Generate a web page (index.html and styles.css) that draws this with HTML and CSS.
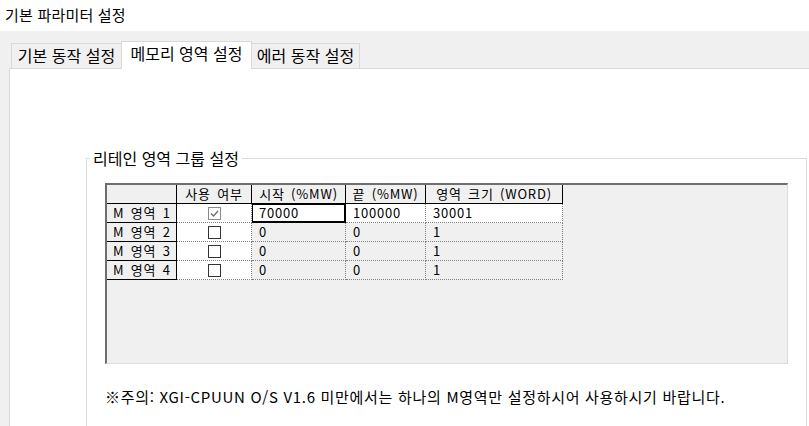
FILE: index.html
```html
<!DOCTYPE html>
<html lang="ko">
<head>
<meta charset="utf-8">
<title>기본 파라미터 설정</title>
<link rel="stylesheet" href="styles.css">
</head>
<body>
<div class="titlebar">기본 파라미터 설정</div>
<div class="dialog">
  <div class="tabs">
    <div class="tab tab-first">기본 동작 설정</div>
    <div class="tab tab-active">메모리 영역 설정</div>
    <div class="tab tab-last">에러 동작 설정</div>
  </div>
  <div class="panel">
    <fieldset class="group">
      <legend>리테인 영역 그룹 설정</legend>
      <div class="grid">
        <div class="table">
          <div class="hd"></div>
          <div class="hd center">사용 여부</div>
          <div class="hd center">시작 (%MW)</div>
          <div class="hd center">끝 (%MW)</div>
          <div class="hd center">영역 크기 (WORD)</div>

          <div class="hd rowhd">M 영역 1</div>
          <div class="cell white chk"><span class="box checked"><svg viewBox="0 0 11 11" width="11" height="11"><polyline points="2,5.5 4.5,8 9,3" fill="none" stroke="#6f6f6f" stroke-width="1.4"/></svg></span></div>
          <div class="cell white focus">70000</div>
          <div class="cell white">100000</div>
          <div class="cell white">30001</div>

          <div class="hd rowhd">M 영역 2</div>
          <div class="cell white chk"><span class="box"></span></div>
          <div class="cell">0</div>
          <div class="cell">0</div>
          <div class="cell">1</div>

          <div class="hd rowhd">M 영역 3</div>
          <div class="cell white chk"><span class="box"></span></div>
          <div class="cell">0</div>
          <div class="cell">0</div>
          <div class="cell">1</div>

          <div class="hd rowhd">M 영역 4</div>
          <div class="cell white chk"><span class="box"></span></div>
          <div class="cell">0</div>
          <div class="cell">0</div>
          <div class="cell">1</div>
        </div>
      </div>
      <p class="note">※주의: XGI-CPUUN O/S V1.6 미만에서는 하나의 M영역만 설정하시어 사용하시기 바랍니다.</p>
    </fieldset>
  </div>
</div>
</body>
</html>
```
FILE: styles.css
```css
html, body {
  margin: 0;
  padding: 0;
  width: 809px;
  height: 426px;
  overflow: hidden;
  background: #f0f0f0;
}
body {
  font-family: "Noto Sans CJK KR", "Noto Sans", sans-serif;
  color: #000;
}
.titlebar {
  height: 31px;
  box-sizing: border-box;
  background: #fff;
  font-size: 15px;
  line-height: 30px;
  padding-left: 5px;
  letter-spacing: 0.2px;
}
.dialog {
  height: 395px;
  box-sizing: border-box;
  padding: 10px 0 0 9px;
  display: flex;
  flex-direction: column;
}
.tabs {
  display: flex;
  align-items: flex-end;
  height: 28px;
  padding-left: 2px;
  margin-bottom: -1px;
  position: relative;
  z-index: 1;
}
.tab {
  box-sizing: border-box;
  height: 25px;
  margin-bottom: 1px;
  background: #f0f0f0;
  border-top: 1px solid #d9d9d9;
  font-size: 16px;
  line-height: 23px;
  text-align: center;
  white-space: nowrap;
}
.tab-first {
  width: 111px;
  border-left: 1px solid #d9d9d9;
  border-right: 1px solid #d9d9d9;
}
.tab-active {
  width: 131px;
  height: 28px;
  margin-bottom: 0;
  margin-left: -1px;
  background: #fff;
  border-left: 1px solid #d9d9d9;
  border-right: 1px solid #d9d9d9;
  line-height: 22px;
  position: relative;
}
.tab-last {
  width: 108px;
  border-right: 1px solid #d9d9d9;
}
.panel {
  flex: 1;
  background: #fff;
  border-top: 1px solid #d9d9d9;
  border-left: 1px solid #d9d9d9;
}
.group {
  box-sizing: border-box;
  width: 721px;
  height: 320px;
  margin: 79px 0 0 76px;
  padding: 0;
  border: 1px solid #dcdcdc;
}
.group legend {
  font-size: 16px;
  line-height: 20px;
  padding: 0 3px;
  margin-left: 3px;
}
.grid {
  box-sizing: border-box;
  width: 683px;
  height: 181px;
  margin: 15px 0 0 18px;
  background: #f0f0f0;
  border-top: 2px solid #6e6e6e;
  border-left: 2px solid #6e6e6e;
  border-right: 1px solid #dcdcdc;
  border-bottom: 1px solid #dcdcdc;
}
.table {
  display: grid;
  grid-template-columns: 70px 75px 94px 80px 137px;
  grid-template-rows: repeat(5, 19px);
  font-size: 13px;
  line-height: 18px;
  letter-spacing: 0.8px;
  word-spacing: 2px;
}
.hd, .cell {
  box-sizing: border-box;
  white-space: nowrap;
  overflow: hidden;
}
.hd {
  background: #f0f0f0;
  border-right: 1px solid #000;
  border-bottom: 1px solid #000;
}
.center {
  text-align: center;
}
.rowhd {
  padding-left: 6px;
}
.cell {
  background: #f0f0f0;
  border-right: 1px dotted #808080;
  border-bottom: 1px dotted #808080;
  padding-left: 7px;
}
.white {
  background: #fff;
}
.focus {
  border: 0;
  padding-left: 7px;
  box-shadow: inset 1px 1px 0 #000, inset -2px -2px 0 #000;
}
.chk {
  display: flex;
  align-items: center;
  justify-content: center;
  padding-left: 0;
}
.box {
  box-sizing: border-box;
  width: 13px;
  height: 13px;
  border: 1px solid #333;
  background: #fff;
  display: flex;
}
.box.checked {
  border-color: #8a8a8a;
}
.note {
  margin: 23px 0 0 18px;
  font-size: 15px;
  line-height: 20px;
  letter-spacing: 0.7px;
  white-space: nowrap;
}
```
